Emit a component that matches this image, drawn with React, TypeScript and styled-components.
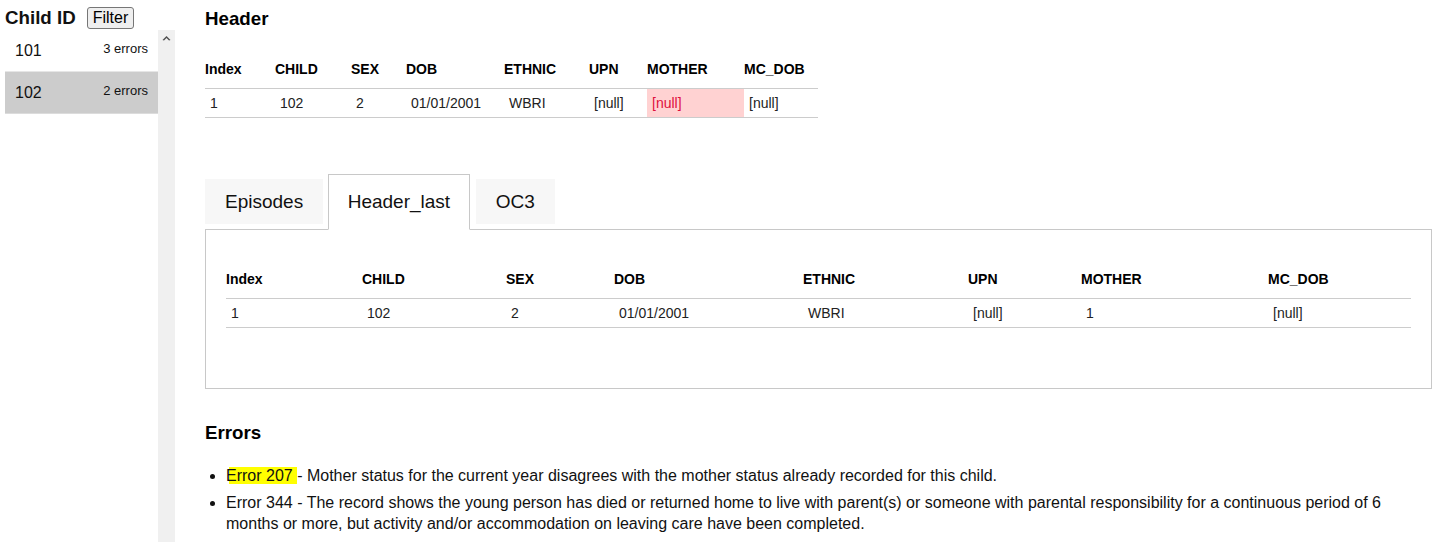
import styled, { createGlobalStyle } from "styled-components";

const GlobalStyle = createGlobalStyle`
  html, body {
    margin: 0;
    padding: 0;
    background: #fff;
    font-family: "Liberation Sans", Arial, sans-serif;
    color: #111;
  }
`;

const Page = styled.div`
  display: flex;
  height: 100vh;
  overflow: hidden;
`;

const Sidebar = styled.aside`
  display: flex;
  flex-direction: column;
  width: 170px;
  padding-left: 5px;
  flex-shrink: 0;
`;

const SideHead = styled.div`
  display: flex;
  align-items: center;
  gap: 10px;
  height: 30px;
  padding-top: 5px;
  box-sizing: border-box;
`;

const SideTitle = styled.h3`
  margin: 0;
  font-size: 18.72px;
  font-weight: bold;
`;

const FilterButton = styled.button`
  font-family: "Liberation Sans", Arial, sans-serif;
  font-size: 16px;
  line-height: 18px;
  padding: 1px 5px;
  margin-left: 1px;
  border: 1px solid #767676;
  border-radius: 3px;
  background: #efefef;
  color: #000;
`;

const SideBody = styled.div`
  display: flex;
  flex: 1;
`;

const ChildList = styled.ul`
  list-style: none;
  margin: 0;
  padding: 0;
  width: 153px;
`;

const ChildItem = styled.li<{ $active?: boolean }>`
  display: flex;
  align-items: center;
  justify-content: space-between;
  height: 42px;
  box-sizing: border-box;
  padding: 0 10px;
  background: ${(p) => (p.$active ? "#cccccc" : "transparent")};
  border-bottom: 1px solid ${(p) => (p.$active ? "#dcdcdc" : "#e6e6e6")};
`;

const ChildId = styled.span`
  font-size: 16px;
  color: #111;
`;

const ErrorCount = styled.span`
  font-size: 13px;
  color: #111;
  margin-bottom: 4px;
`;

const ScrollTrack = styled.div`
  width: 17px;
  background: #f0f0f0;
  display: flex;
  justify-content: center;
  padding-top: 5px;
  box-sizing: border-box;
`;

const Main = styled.main`
  flex: 1;
  padding: 0 6px 0 30px;
  min-width: 0;
`;

const SectionTitle = styled.h3<{ $top: number; $bottom: number }>`
  margin: ${(p) => p.$top}px 0 ${(p) => p.$bottom}px;
  font-size: 18.72px;
  font-weight: bold;
  line-height: 22px;
  color: #000;
`;

const Table = styled.table<{ $full?: boolean }>`
  border-collapse: collapse;
  table-layout: fixed;
  width: ${(p) => (p.$full ? "100%" : "auto")};
  font-size: 14px;
  line-height: 18px;
`;

const Col = styled.col<{ $w: number }>`
  width: ${(p) => p.$w}px;
`;

const Th = styled.th`
  text-align: left;
  font-weight: bold;
  padding: 10px 0;
  border-bottom: 1px solid #cccccc;
  color: #000;
  white-space: nowrap;
`;

const Td = styled.td<{ $bad?: boolean }>`
  padding: 5px;
  border-bottom: 1px solid #cccccc;
  color: ${(p) => (p.$bad ? "#e0103c" : "#222")};
  background: ${(p) => (p.$bad ? "#ffd2d2" : "transparent")};
  white-space: nowrap;
`;

const TabList = styled.div`
  display: flex;
  align-items: flex-end;
  gap: 5px;
  margin-top: 56px;
`;

const Tab = styled.div<{ $active?: boolean }>`
  display: flex;
  align-items: center;
  font-size: 19px;
  color: #111;
  box-sizing: border-box;
  padding: 0 ${(p) => (p.$active ? 18.5 : 20)}px;
  height: ${(p) => (p.$active ? 56 : 45)}px;
  margin-bottom: ${(p) => (p.$active ? -1 : 5)}px;
  margin-right: ${(p) => (p.$active ? 1 : 0)}px;
  background: ${(p) => (p.$active ? "#fff" : "#f7f7f7")};
  border: ${(p) => (p.$active ? "1px solid #c8c8c8" : "none")};
  border-bottom: ${(p) => (p.$active ? "1px solid #fff" : "none")};
  position: relative;
  z-index: 1;
`;

const TabPanel = styled.div`
  border: 1px solid #c8c8c8;
  padding: 30px 20px 60px;
`;

const ErrorList = styled.ul`
  margin: 0;
  padding-left: 21px;
  font-size: 16px;
  line-height: 21px;
  color: #111;
`;

const ErrorItem = styled.li`
  margin-bottom: 6px;
`;

const Code = styled.span<{ $highlight?: boolean }>`
  background: ${(p) =>
    p.$highlight ? "linear-gradient(to right, transparent 3px, #ffff00 3px)" : "none"};
`;

const columns = ["Index", "CHILD", "SEX", "DOB", "ETHNIC", "UPN", "MOTHER", "MC_DOB"];
const headerWidths = [70, 76, 55, 98, 85, 58, 97, 74];
const panelWidths = [136, 144, 108, 189, 165, 113, 187, 143];

const headerRow = ["1", "102", "2", "01/01/2001", "WBRI", "[null]", "[null]", "[null]"];
const lastRow = ["1", "102", "2", "01/01/2001", "WBRI", "[null]", "1", "[null]"];

const children = [
  { id: "101", errors: 3 },
  { id: "102", errors: 2 },
];

const errors = [
  {
    code: "Error 207",
    text: "Mother status for the current year disagrees with the mother status already recorded for this child.",
    highlight: true,
  },
  {
    code: "Error 344",
    text: "The record shows the young person has died or returned home to live with parent(s) or someone with parental responsibility for a continuous period of 6 months or more, but activity and/or accommodation on leaving care have been completed.",
  },
];

function DataTable({
  widths,
  row,
  bad,
  full,
}: {
  widths: number[];
  row: string[];
  bad?: number;
  full?: boolean;
}) {
  return (
    <Table $full={full}>
      <colgroup>
        {widths.map((w, i) => (
          <Col key={i} $w={w} />
        ))}
      </colgroup>
      <thead>
        <tr>
          {columns.map((c) => (
            <Th key={c}>{c}</Th>
          ))}
        </tr>
      </thead>
      <tbody>
        <tr>
          {row.map((v, i) => (
            <Td key={i} $bad={i === bad}>
              {v}
            </Td>
          ))}
        </tr>
      </tbody>
    </Table>
  );
}

export default function App() {
  return (
    <>
      <GlobalStyle />
      <Page>
        <Sidebar>
          <SideHead>
            <SideTitle>Child ID</SideTitle>
            <FilterButton>Filter</FilterButton>
          </SideHead>
          <SideBody>
            <ChildList>
              {children.map((c) => (
                <ChildItem key={c.id} $active={c.id === "102"}>
                  <ChildId>{c.id}</ChildId>
                  <ErrorCount>{c.errors} errors</ErrorCount>
                </ChildItem>
              ))}
            </ChildList>
            <ScrollTrack>
              <svg width="9" height="6" viewBox="0 0 9 6">
                <path d="M0.5 5 L4.5 1 L8.5 5 L7 5.5 L4.5 3 L2 5.5 Z" fill="#505050" />
              </svg>
            </ScrollTrack>
          </SideBody>
        </Sidebar>
        <Main>
          <SectionTitle $top={8} $bottom={20}>
            Header
          </SectionTitle>
          <DataTable widths={headerWidths} row={headerRow} bad={6} />
          <TabList>
            <Tab>Episodes</Tab>
            <Tab $active>Header_last</Tab>
            <Tab>OC3</Tab>
          </TabList>
          <TabPanel>
            <DataTable widths={panelWidths} row={lastRow} full />
          </TabPanel>
          <SectionTitle $top={33} $bottom={21}>
            Errors
          </SectionTitle>
          <ErrorList>
            {errors.map((e) => (
              <ErrorItem key={e.code}>
                <Code $highlight={e.highlight}>{e.code} </Code>- {e.text}
              </ErrorItem>
            ))}
          </ErrorList>
        </Main>
      </Page>
    </>
  );
}
